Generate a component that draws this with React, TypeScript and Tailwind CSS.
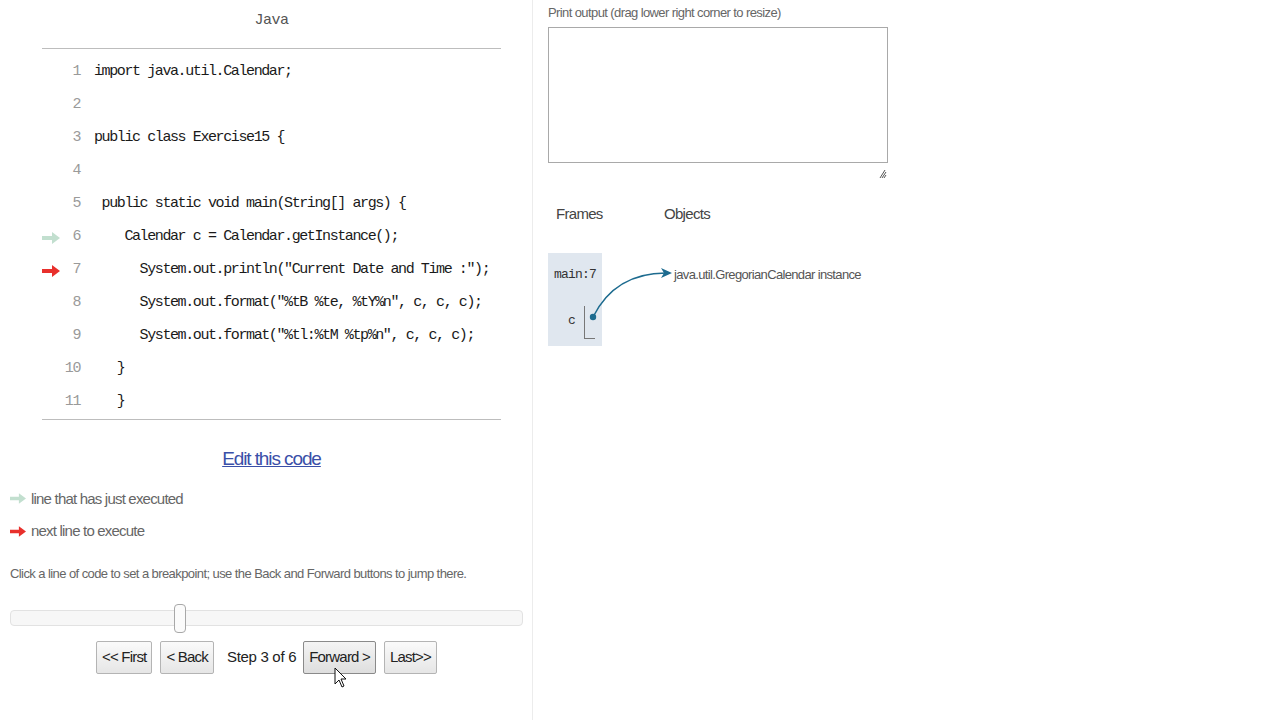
import React from 'react';

const sans = { fontFamily: '"Liberation Sans", Arial, sans-serif' };
const mono = { fontFamily: '"Liberation Mono", "DejaVu Sans Mono", monospace' };

type Line = { n: number; text: string; mark?: 'prev' | 'next' };

const lines: Line[] = [
  { n: 1, text: 'import java.util.Calendar;' },
  { n: 2, text: '' },
  { n: 3, text: 'public class Exercise15 {' },
  { n: 4, text: '' },
  { n: 5, text: ' public static void main(String[] args) {' },
  { n: 6, text: '    Calendar c = Calendar.getInstance();', mark: 'prev' },
  { n: 7, text: '      System.out.println("Current Date and Time :");', mark: 'next' },
  { n: 8, text: '      System.out.format("%tB %te, %tY%n", c, c, c);' },
  { n: 9, text: '      System.out.format("%tl:%tM %tp%n", c, c, c);' },
  { n: 10, text: '   }' },
  { n: 11, text: '   }' },
];

function Arrow({ color, w = 18, h = 12 }: { color: string; w?: number; h?: number }) {
  return (
    <svg width={w} height={h} viewBox="0 0 18 12">
      <path d="M0 4 H10 V0 L18 6 L10 12 V8 H0 Z" fill={color} />
    </svg>
  );
}

function Btn({ children, active }: { children: React.ReactNode; active?: boolean }) {
  return (
    <button
      className={
        active
          ? 'h-[33px] px-[5px] border border-[#8a8a8a] rounded-[2px] bg-gradient-to-b from-[#f4f4f4] to-[#dedede] text-[15px] text-[#222] tracking-[-0.8px]'
          : 'h-[33px] px-[5px] border border-[#b4b4b4] rounded-[2px] bg-gradient-to-b from-[#fafafa] to-[#e6e6e6] text-[15px] text-[#222] tracking-[-0.8px]'
      }
      style={sans}
    >
      {children}
    </button>
  );
}

export default function App() {
  return (
    <div className="relative flex w-[1280px] h-[720px] bg-white overflow-hidden" style={sans}>
      {/* Left: code panel */}
      <div className="w-[533px] h-full border-r border-[#ececec] flex flex-col">
        <div className="h-[48px] ml-[42px] w-[459px] flex justify-center pt-[10px] text-[15px] text-[#555] tracking-[-0.5px]" style={mono}>
          Java
        </div>
        <div className="ml-[42px] w-[459px] border-t border-b border-[#bdbdbd] pt-[7px] pb-[0px]">
          {lines.map((l) => (
            <div key={l.n} className="h-[33px] flex items-center">
              <div className="w-[20px] flex items-center">
                {l.mark === 'prev' && <Arrow color="#c2dfcf" />}
                {l.mark === 'next' && <Arrow color="#e8302c" />}
              </div>
              <div className="w-[18px] text-right text-[15px] text-[#9a9a9a] tracking-[-1.4px]" style={mono}>
                {l.n}
              </div>
              <div className="ml-[14px] whitespace-pre text-[15px] text-[#1a1a1a] tracking-[-1.4px]" style={mono}>
                {l.text}
              </div>
            </div>
          ))}
        </div>
        <div className="ml-[42px] w-[459px] flex justify-center mt-[25px]">
          <a className="text-[19px] text-[#3a4fa8] underline tracking-[-1.1px]" href="#">
            Edit this code
          </a>
        </div>
        <div className="ml-[10px] mt-[14px] flex flex-col gap-[10px]">
          <div className="flex items-center gap-[5px] text-[15px] text-[#666] tracking-[-0.8px]">
            <Arrow color="#c2dfcf" w={16} h={11} />
            <span>line that has just executed</span>
          </div>
          <div className="flex items-center gap-[5px] text-[15px] text-[#666] tracking-[-0.8px]">
            <Arrow color="#e8302c" w={16} h={11} />
            <span>next line to execute</span>
          </div>
        </div>
        <div className="ml-[10px] mt-[21px] text-[13px] text-[#666] tracking-[-0.58px]">
          Click a line of code to set a breakpoint; use the Back and Forward buttons to jump there.
        </div>
        <div className="ml-[10px] mt-[27px] w-[513px] h-[16px] rounded-[4px] border border-[#e2e2e2] bg-[#f7f7f7] flex items-center">
          <div className="ml-[163px] w-[12px] h-[29px] rounded-[4px] border border-[#a8a8a8] bg-[#fbfbfb]" />
        </div>
        <div className="mt-[15px] ml-[96px] flex items-center">
          <Btn>&lt;&lt; First</Btn>
          <div className="ml-[8px]">
            <Btn>&lt; Back</Btn>
          </div>
          <span className="ml-[13px] mr-[7px] text-[15px] text-[#222] tracking-[-0.3px]">Step 3 of 6</span>
          <Btn active>Forward &gt;</Btn>
          <div className="ml-[8px]">
            <Btn>Last&gt;&gt;</Btn>
          </div>
        </div>
      </div>

      {/* Right: output and visualization */}
      <div className="flex-1 pl-[15px] pt-[3px]">
        <div className="text-[13px] text-[#666] tracking-[-0.6px]">Print output (drag lower right corner to resize)</div>
        <div className="mt-[4px] w-[340px] h-[136px] border border-[#a9a9a9] bg-white" />
        <div className="w-[340px] flex justify-end pr-[1px] mt-[6px]">
          <svg width="8" height="10" viewBox="0 0 8 10">
            <path d="M1 9 L6 1 M3 9 L7 3 M5 9 L7 6" stroke="#555" strokeWidth="1" />
          </svg>
        </div>
        <div className="mt-[24px] flex text-[15px] text-[#444] tracking-[-0.7px]">
          <div className="ml-[8px] w-[108px]">Frames</div>
          <div>Objects</div>
        </div>
        <div className="relative mt-[28px] flex">
          <div className="w-[54px] h-[93px] bg-[#e0e7ef] flex flex-col">
            <div className="mt-[12px] ml-[6px] text-[13px] text-[#333] tracking-[-0.8px]" style={mono}>
              main:7
            </div>
            <div className="mt-[21px] flex">
              <div className="ml-[20px] w-[10px] pt-[5px] text-[13px] text-[#333]" style={mono}>
                c
              </div>
              <div className="ml-[6px] w-[11px] h-[33px] border-l border-b border-[#777]" />
            </div>
          </div>
          <div className="ml-[72px] mt-[12px] text-[13px] text-[#555] tracking-[-0.65px]">
            java.util.GregorianCalendar instance
          </div>
          <svg className="absolute left-0 top-0" width="140" height="80" viewBox="0 0 140 80">
            <path d="M45 64 C58 38 80 20 118 20" fill="none" stroke="#1d6b8f" strokeWidth="1.5" />
            <path d="M113 15 L124 20 L113 25 L116 20 Z" fill="#1d6b8f" />
            <circle cx="45" cy="64" r="3.2" fill="#1d6b8f" />
          </svg>
        </div>
      </div>

      {/* mouse cursor */}
      <svg className="absolute left-[334px] top-[667px]" width="14" height="22" viewBox="0 0 14 22">
        <path d="M1 1 L1 17 L5 13 L8 20 L10 19 L7 12 L12 12 Z" fill="#fff" stroke="#111" strokeWidth="1" />
      </svg>
    </div>
  );
}
